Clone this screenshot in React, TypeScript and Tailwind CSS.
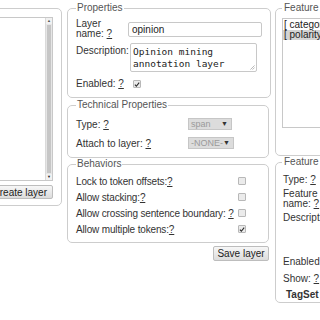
import React from "react";

const Q = () => <span className="underline">?</span>;

function Box({ checked }: { checked?: boolean }) {
  return (
    <span className="inline-flex w-[8px] h-[8px] shrink-0 items-center justify-center rounded-[1px] border border-[#b8b8b8] bg-[#ebebeb]">
      {checked && (
        <svg viewBox="0 0 8 8" className="w-[7px] h-[7px]">
          <path d="M1.2 4.3 L3.1 6.3 L6.9 1.4" stroke="#2a2a2a" strokeWidth="1.5" fill="none" />
        </svg>
      )}
    </span>
  );
}

function Select({ value, width }: { value: string; width: string }) {
  return (
    <span
      className={`${width} h-[12px] shrink-0 flex items-center justify-between pl-[2px] pr-[3px] bg-[#dcdcdc] border border-[#c6c6c6] text-[#9a9a9a] text-[9px] leading-[10px]`}
    >
      <span>{value}</span>
      <span className="text-[#333] text-[7px]">▼</span>
    </span>
  );
}

function Group({
  title,
  className = "",
  legendClass = "",
  children,
}: {
  title?: string;
  className?: string;
  legendClass?: string;
  children: React.ReactNode;
}) {
  return (
    <fieldset className={`border border-[#cdcdcd] rounded-[5px] ${className}`}>
      <legend className={`px-[1px] h-[12px] leading-[12px] text-[#555] ${legendClass}`}>{title}</legend>
      {children}
    </fieldset>
  );
}

export default function App() {
  return (
    <div className="w-[320px] h-[320px] overflow-hidden bg-white flex items-start pt-[2px] font-['Liberation_Sans',Arial,sans-serif] text-[10px] text-[#333]">
      {/* layers column */}
      <div className="w-[62px] shrink-0">
        <Group className="-ml-[58px] w-[120px] px-[8px] pb-[6px]" legendClass="w-0 px-0">
          <div className="mt-[3px] h-[164px] flex border border-[#c8c8c8] bg-white">
            <div className="flex-1" />
            <div className="w-[7px] flex flex-col bg-[#f1f1f1] border-l border-[#dadada]">
              <div className="h-[6px] flex items-center justify-center text-[4px] leading-[4px] text-[#555]">▲</div>
              <div className="flex-1 bg-[#c6c6c6] border border-[#e6e6e6]" />
              <div className="h-[6px] flex items-center justify-center text-[4px] leading-[4px] text-[#222]">▼</div>
            </div>
          </div>
          <div className="mt-[4px] h-[14px] flex items-center justify-end pr-[5px] border border-[#bdbdbd] rounded-[2px] bg-gradient-to-b from-[#f7f7f7] to-[#dcdcdc] text-[#222]">
            Create layer
          </div>
        </Group>
      </div>

      {/* layer details */}
      <div className="ml-[5px] w-[202px] shrink-0 flex flex-col">
        <Group title="Properties" className="px-[8px] pb-[7px]">
          <div className="flex mt-[5px]">
            <div className="w-[52px] shrink-0 leading-[10px]">
              Layer
              <br />
              name: <Q />
            </div>
            <div className="mt-[3px] h-[15px] w-[134px] shrink-0 border border-[#c8c8c8] rounded-[2px] pl-[3px] leading-[13px] text-[#222]">
              opinion
            </div>
          </div>
          <div className="flex mt-[4px]">
            <div className="w-[54px] shrink-0 mt-[2px] leading-[12px]">Description:</div>
            <div className="relative w-[127px] h-[29px] shrink-0 border border-[#c8c8c8] rounded-[2px] pl-[2px] pt-[2px] font-['DejaVu_Sans_Mono',monospace] text-[9.5px] leading-[11.5px] text-[#222]">
              Opinion mining
              <br />
              annotation layer
              <svg viewBox="0 0 6 6" className="absolute right-[1px] bottom-[1px] w-[5px] h-[5px]">
                <path d="M5.5 0.5 L0.5 5.5 M5.5 3 L3 5.5" stroke="#999" strokeWidth="0.8" />
              </svg>
            </div>
          </div>
          <div className="flex items-center mt-[6px] leading-[12px]">
            <div className="w-[57px] shrink-0">
              Enabled: <Q />
            </div>
            <Box checked />
          </div>
        </Group>

        <Group title="Technical Properties" className="mt-[1px] px-[8px] pb-[8px]">
          <div className="flex items-center mt-[7px] h-[12px]">
            <div className="w-[112px] shrink-0">
              Type: <Q />
            </div>
            <Select value="span" width="w-[44px]" />
          </div>
          <div className="flex items-center mt-[7px] h-[12px]">
            <div className="w-[112px] shrink-0">
              Attach to layer: <Q />
            </div>
            <Select value="-NONE-" width="w-[46px]" />
          </div>
        </Group>

        <Group title="Behaviors" className="px-[8px] pb-[5px]">
          <div className="mt-[3px] flex flex-col">
            {[
              { label: "Lock to token offsets:", checked: false },
              { label: "Allow stacking:", checked: false },
              { label: "Allow crossing sentence boundary: ", checked: false },
              { label: "Allow multiple tokens:", checked: true },
            ].map((r) => (
              <div key={r.label} className="h-[16px] flex items-center justify-between pr-[14px]">
                <span className="whitespace-pre tracking-[-0.15px]">
                  {r.label}
                  <Q />
                </span>
                <Box checked={r.checked} />
              </div>
            ))}
          </div>
        </Group>

        <div className="mt-[3px] self-end w-[56px] h-[15px] flex items-center justify-center border border-[#bdbdbd] rounded-[2px] bg-gradient-to-b from-[#f7f7f7] to-[#dcdcdc] text-[#222]">
          Save layer
        </div>
      </div>

      {/* features column */}
      <div className="ml-[6px] w-[80px] shrink-0 flex flex-col">
        <Group title="Feature" className="px-[6px] pb-[27px]" legendClass="px-[2px]">
          <div className="mt-[4px] h-[110px] border border-[#c8c8c8] bg-white overflow-hidden whitespace-nowrap text-[#222]">
            <div className="pl-[1px] pt-[1px] leading-[10px]">[ category ] category</div>
            <div className="pl-[1px] leading-[10px] bg-[#d4d4d4]">[ polarity ] polarity</div>
          </div>
        </Group>

        <Group title="Feature" className="px-[6px] pb-[1px] whitespace-nowrap" legendClass="px-[2px]">
          <div className="mt-[6px] pl-[1px] leading-[12px]">
            Type: <Q />
          </div>
          <div className="mt-[3px] pl-[1px] leading-[10px]">
            Feature
            <br />
            name: <Q />
          </div>
          <div className="mt-[3px] pl-[1px] leading-[12px]">Description:</div>
          <div className="mt-[32px] pl-[1px] leading-[12px]">
            Enabled: <Q />
          </div>
          <div className="mt-[5px] pl-[1px] leading-[12px]">
            Show: <Q />
          </div>
          <div className="mt-[4px] pl-[4px] leading-[12px] font-bold">TagSet</div>
        </Group>
      </div>
    </div>
  );
}
